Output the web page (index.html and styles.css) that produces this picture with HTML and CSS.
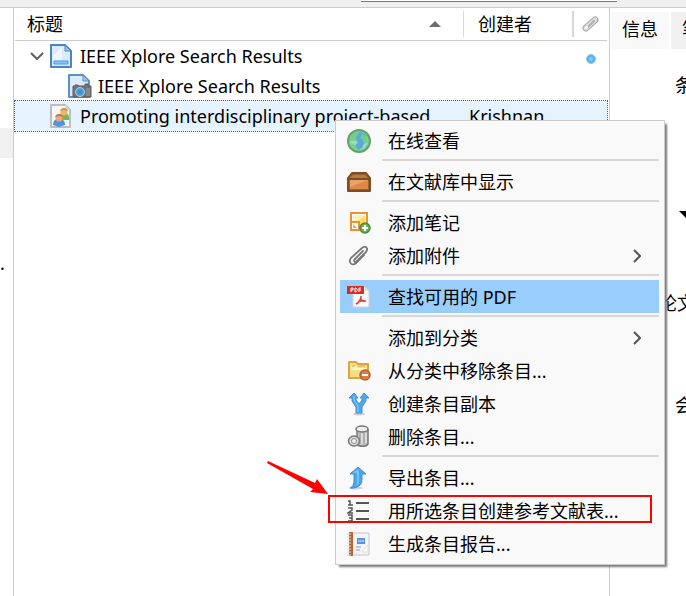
FILE: index.html
```
<!DOCTYPE html>
<html lang="zh-CN">
<head>
  <meta charset="UTF-8" />
  <meta name="viewport" content="width=device-width, initial-scale=1.0"/>
  <title>文献库</title>
  <link rel="stylesheet" href="styles.css">
</head>
<body>

  <header class="toolbar">
    <div class="search-edge"></div>
  </header>

  <div class="panes">
    <aside class="collections">
      <div class="collection-selected"></div>
      <span class="collection-name">.</span>
    </aside>

    <main class="items">
      <table class="tree">
        <thead>
          <tr>
            <th class="col-title">
              <div class="head">标题
                <svg width="12" height="6" viewBox="0 0 12 6"><path d="M0 6L6 0L12 6Z" fill="#6d6d6d"/></svg>
              </div>
            </th>
            <th class="col-creator"><div class="head">创建者</div></th>
            <th class="col-attach">
              <div class="head">
                <svg width="18" height="16" viewBox="0 0 18 16" fill="none" stroke-linecap="round">
                  <path d="M4 12L13 4" stroke="#a5a5a5" stroke-width="7"/>
                  <path d="M4 12L13 4" stroke="#dedede" stroke-width="5"/>
                  <path d="M6 11L12 5" stroke="#b0b0b0" stroke-width="2"/>
                  <path d="M4 12L5 11" stroke="#fff" stroke-width="2"/>
                </svg>
              </div>
            </th>
          </tr>
        </thead>
        <tbody>
          <tr>
            <td>
              <div class="cell">
                <svg class="twisty" width="14" height="8" viewBox="0 0 14 8"><path d="M1 1L7 7L13 1" fill="none" stroke="#606060" stroke-width="2"/></svg>
                <svg width="22" height="24" viewBox="0 0 22 24">
                  <path d="M1 1H15L21 7V23H1Z" fill="#dcebfc" stroke="#4b83c4" stroke-width="2" stroke-linejoin="round"/>
                  <path d="M3 12L12 3V16H3Z" fill="#eff6ff"/>
                  <path d="M15 1V7H21Z" fill="#9cc5ee" stroke="#4b83c4"/>
                  <path d="M4 17H18V20H4Z" fill="#83c8fa" stroke="#4b9ce2"/>
                </svg>
                IEEE Xplore Search Results
              </div>
            </td>
            <td></td>
            <td>
              <svg class="dot" width="10" height="10" viewBox="0 0 10 10"><circle cx="5" cy="5" r="4.5" fill="#53b7ea" stroke="#8bc9ea"/><circle cx="5" cy="5" r="2" fill="#7dcdf3"/></svg>
            </td>
          </tr>
          <tr>
            <td>
              <div class="cell child">
                <svg width="24" height="24" viewBox="0 0 24 24">
                  <path d="M1 1H15L21 7V23H1Z" fill="#dcebfc" stroke="#5c8fc9" stroke-width="2" stroke-linejoin="round"/>
                  <path d="M15 1V7H21Z" fill="#9cc5ee" stroke="#5c8fc9"/>
                  <path d="M5 12H7V11H10L11 12H17V10H20V12H23V23H5Z" fill="#707377" stroke="#5b5e63"/>
                  <path d="M18 14H22V22H18Z" fill="#85888c"/>
                  <circle cx="12" cy="18" r="4.5" fill="#55a7e4" stroke="#c0c6cb"/>
                  <circle cx="12" cy="18" r="2.5" fill="#3b91dc"/>
                </svg>
                IEEE Xplore Search Results
              </div>
            </td>
            <td></td>
            <td></td>
          </tr>
          <tr class="selected">
            <td>
              <div class="cell leaf">
                <svg width="22" height="24" viewBox="0 0 22 24">
                  <path d="M1 1H15L20 6V23H1Z" fill="#f5f5f3" stroke="#bdbdbd" stroke-width="2" stroke-linejoin="round"/>
                  <path d="M15 1V6H20Z" fill="#ddd"/>
                  <path d="M9 14C9 10 11 9 14 9S19 10 19 14V16H9Z" fill="#70b95c"/>
                  <circle cx="14" cy="8" r="3.5" fill="#eab570"/>
                  <path d="M10 7C11 3 17 3 18 7L14 6Z" fill="#c7954a"/>
                  <path d="M3 21C3 17 5 15 9 15S15 17 15 21L9 23Z" fill="#5294dc"/>
                  <circle cx="9" cy="14" r="3.5" fill="#edaa77"/>
                  <path d="M5 13C6 9 12 9 13 13L9 12Z" fill="#c4703f"/>
                </svg>
                Promoting interdisciplinary project-based
              </div>
            </td>
            <td><div class="creator">Krishnan</div></td>
            <td></td>
          </tr>
        </tbody>
      </table>
    </main>

    <aside class="info">
      <div class="tabs">
        <button class="tab active">信息</button>
        <button class="tab">笔</button>
      </div>
      <div class="fields">
        <span>条</span>
        <svg width="14" height="8" viewBox="0 0 14 8"><path d="M0 0H14L7 7Z" fill="#000"/></svg>
        <span class="wide">论文</span>
        <span>会</span>
      </div>
    </aside>
  </div>

  <ul class="menu">
    <li>
      <button>
        <svg width="24" height="24" viewBox="0 0 24 24">
          <circle cx="12" cy="12" r="11" fill="#7cc9a0" stroke="#64a368" stroke-width="2"/>
          <circle cx="12" cy="12" r="9" fill="#9adcb0"/>
          <path d="M8 4L14 3L19 6L20 11L17 14L15 19L11 21L8 17L11 13L7 10L3 12L5 7Z" fill="#5aa8de"/>
          <path d="M3 8L8 4L12 5L9 8L10 11L6 12L3 11ZM15 5L20 8L21 13L17 15L16 11L13 9ZM4 14L9 17L10 21L6 19Z" fill="#6fd284"/>
        </svg>
        在线查看
      </button>
    </li>
    <li class="separator"></li>
    <li>
      <button>
        <svg width="24" height="20" viewBox="0 0 24 20">
          <path d="M1 6L5 1H19L23 6V19H1Z" fill="#9c602e" stroke="#7c4d22" stroke-width="2" stroke-linejoin="round"/>
          <path d="M3 6L6 3H18L21 6Z" fill="#b27c43"/>
          <path d="M3 8H21V17H3Z" fill="#df8845"/>
          <path d="M3 8H21L3 15Z" fill="#e8a263"/>
          <path d="M1 7H23" stroke="#7c4d22" stroke-width="2"/>
        </svg>
        在文献库中显示
      </button>
    </li>
    <li class="separator"></li>
    <li>
      <button>
        <svg width="24" height="22" viewBox="0 0 24 22">
          <path d="M4 1H20V18H4Z" fill="#fff" stroke="#e99336" stroke-width="2"/>
          <path d="M6 3H18V16H6Z" fill="#fadd68"/>
          <path d="M6 3H18L6 13Z" fill="#fff1ae"/>
          <path d="M4 10H12V18H4Z" fill="#fff" stroke="#e99336" stroke-width="2"/>
          <path d="M6 12L10 16H6Z" fill="#f1a846"/>
          <circle cx="18" cy="16" r="5" fill="#6fae56" stroke="#518a3d" stroke-width="1.5"/>
          <path d="M15 16H21M18 13V19" stroke="#fff" stroke-width="2"/>
        </svg>
        添加笔记
      </button>
    </li>
    <li>
      <button>
        <svg width="24" height="22" viewBox="0 0 24 22" fill="none" stroke-linecap="round" stroke-linejoin="round">
          <path d="M16 6L8 14C6 16 8 18 10 16L19 7C22 3 18 0 15 3L4 13C1 17 5 22 9 18L17 10" stroke="#777" stroke-width="1.8"/>
        </svg>
        添加附件
        <svg class="arrow" width="8" height="14" viewBox="0 0 8 14"><path d="M1 1L7 7L1 13" fill="none" stroke="#555" stroke-width="2"/></svg>
      </button>
    </li>
    <li class="separator"></li>
    <li>
      <button class="hover">
        <svg width="24" height="22" viewBox="0 0 24 22">
          <path d="M6 1H18L22 5V21H6Z" fill="#fafafa" stroke="#cfd4da"/>
          <path d="M18 1V5H22Z" fill="#ddd"/>
          <path d="M0 0H17V8H0Z" fill="#dc2d24"/>
          <path d="M4 6V2H6V4H4M8 6V2C11 2 11 6 8 6M12 6V2H14M12 4H14" fill="none" stroke="#fff"/>
          <path d="M9 18C12 17 14 13 14 10C13 13 15 16 18 15C16 14 12 15 9 18Z" fill="none" stroke="#e2453d" stroke-width="1.5"/>
        </svg>
        查找可用的 PDF
      </button>
    </li>
    <li class="separator"></li>
    <li>
      <button>
        <span class="no-icon"></span>
        添加到分类
        <svg class="arrow" width="8" height="14" viewBox="0 0 8 14"><path d="M1 1L7 7L1 13" fill="none" stroke="#555" stroke-width="2"/></svg>
      </button>
    </li>
    <li>
      <button>
        <svg width="24" height="20" viewBox="0 0 24 20">
          <path d="M2 1H9L11 3H21V17H2Z" fill="#f9dc84" stroke="#d9a840" stroke-width="2" stroke-linejoin="round"/>
          <path d="M4 5H9L11 7H19V9H4Z" fill="#fff5c0"/>
          <path d="M5 5H8M11 5H18" stroke="#d9a840"/>
          <circle cx="18" cy="14" r="5" fill="#dc7b47" stroke="#b5602f" stroke-width="1.5"/>
          <path d="M15 14H21" stroke="#fff" stroke-width="2"/>
        </svg>
        从分类中移除条目...
      </button>
    </li>
    <li>
      <button>
        <svg width="24" height="24" viewBox="0 0 24 24">
          <ellipse cx="12" cy="22" rx="6" ry="1.5" fill="#ccc"/>
          <path d="M9 21V15L5 9V6H2L7 1L11 6H9V8L12 12L15 8V6H13L17 1L22 6H19V9L15 15V21Z" fill="#4ea6e8" stroke="#3f92d6" stroke-linejoin="round"/>
          <path d="M11 20V14L7 8V4" fill="none" stroke="#92d0f6"/>
        </svg>
        创建条目副本
      </button>
    </li>
    <li>
      <button>
        <svg width="24" height="24" viewBox="0 0 24 24">
          <path d="M10 4V19C12 22 19 22 21 19V4" fill="#c5c5c5" stroke="#777" stroke-width="1.5"/>
          <path d="M13 8V19M17 8V19" stroke="#999"/>
          <path d="M15 8V19M19 8V18" stroke="#eee"/>
          <ellipse cx="15" cy="4" rx="6" ry="3" fill="#eee" stroke="#777" stroke-width="1.5"/>
          <ellipse cx="7" cy="16" rx="5.5" ry="5" fill="#ddd" stroke="#777" stroke-width="1.5"/>
          <circle cx="7" cy="16" r="2.5" fill="#f7f7f7" stroke="#888"/>
        </svg>
        删除条目...
      </button>
    </li>
    <li class="separator"></li>
    <li>
      <button>
        <svg width="24" height="24" viewBox="0 0 24 24">
          <ellipse cx="9" cy="22" rx="7" ry="1.5" fill="#d5d5d5"/>
          <path d="M3 22C6 21 7 18 7 14V8H3L11 1L19 8H15V14C15 19 10 23 3 22Z" fill="#4da6e8" stroke="#3d93d8" stroke-linejoin="round"/>
          <path d="M6 7L11 3L12 7V14C12 17 11 19 9 20C11 17 10 10 10 7Z" fill="#7cc3f4"/>
        </svg>
        导出条目...
      </button>
    </li>
    <li class="marked">
      <button>
        <svg width="24" height="22" viewBox="0 0 24 22" fill="none" stroke="#555">
          <path d="M9 3H22M9 11H22M9 19H22" stroke-width="2"/>
          <path d="M1 1H3V5M1 5H6M1 8H5V10L1 13H6M1 15H5V21H1M2 18H5" stroke-width="1.5"/>
        </svg>
        用所选条目创建参考文献表...
      </button>
      <svg class="pointer" width="62" height="36" viewBox="0 0 62 36"><path d="M1 0L48 22L50 18L61 33L43 31L46 28L0 2Z" fill="#f00"/></svg>
    </li>
    <li>
      <button>
        <svg width="24" height="24" viewBox="0 0 24 24">
          <path d="M5 1H22V23H5Z" fill="#f2f4f8" stroke="#c3c7cd"/>
          <path d="M2 0H6V24H2Z" fill="#bd6431"/>
          <path d="M0 2H4M0 5H4M0 8H4M0 11H4M0 14H4M0 17H4M0 20H4M0 23H4" stroke="#ddd"/>
          <path d="M10 6H18V12H10Z" fill="#5e91e0"/>
          <path d="M11 9H17" stroke="#dbe8ff"/>
          <path d="M9 15H14M9 18H13" stroke="#7aa3e2"/>
          <path d="M15 20L21 13V20Z" fill="#fff" stroke="#ddd"/>
        </svg>
        生成条目报告...
      </button>
    </li>
  </ul>

</body>
</html>
```
FILE: styles.css
```
* { margin: 0; padding: 0; box-sizing: border-box; }

body {
  font-family: 'Noto Sans', 'Noto Sans CJK SC', sans-serif;
  font-size: 18px;
  line-height: 24px;
  color: #000;
  background-color: #fff;
  display: flex;
  flex-direction: column;
  min-height: 100vh;
  overflow: hidden;
}

button {
  font: inherit;
  color: inherit;
  border: none;
  background: none;
  white-space: nowrap;
}

svg {
  display: block;
  flex: none;
}

.toolbar {
  height: 8px;
  background-color: #f0f0f0;
  border-bottom: 1px solid #ccc;
  padding: 0 69px 0 361px;
}

.search-edge {
  height: 2px;
  background-color: #fff;
  border-bottom: 1px solid #7a7a7a;
}

.panes {
  display: flex;
  flex: 1;
}

.collections {
  width: 14px;
  border-right: 1px solid #ccc;
  padding-top: 120px;
}

.collection-selected {
  height: 30px;
  background-color: #f0f0f0;
  margin-bottom: 93px;
}

.collection-name {
  display: block;
}

.items {
  flex: 1;
  min-width: 0;
  padding: 0 2px 0 1px;
}

/* item tree */
.tree {
  width: 100%;
  table-layout: fixed;
  border-collapse: separate;
  border-spacing: 0;
}

.tree th {
  height: 33px;
  font-weight: normal;
  text-align: left;
  border-bottom: 1px solid #ccc;
}

.tree td {
  height: 30px;
  white-space: nowrap;
}

.col-creator { width: 110px; }
.col-attach { width: 33px; }

.head {
  display: flex;
  align-items: center;
  justify-content: space-between;
  height: 26px;
  padding: 0 22px 0 12px;
  border-right: 1px solid #d9d9d9;
}

.col-creator .head {
  padding: 0 0 0 14px;
  border-right: 2px solid #d9d9d9;
}

.col-attach .head {
  padding: 0 8px;
  border: none;
}

.cell {
  display: flex;
  align-items: center;
  gap: 8px;
  padding-left: 15px;
}

.cell.child { padding-left: 53px; gap: 6px; }
.cell.leaf { padding-left: 35px; }
.twisty { margin-right: -2px; }
.dot { margin: 6px 0 0 12px; }
.creator { padding-left: 5px; }

.selected {
  background-color: #e5f3ff;
  outline: 1px dotted #0078d7;
}

/* item details */
.info {
  width: 77px;
  border-left: 1px solid #ccc;
  overflow: hidden;
}

.tabs {
  display: flex;
  gap: 2px;
  padding: 4px 0 0 1px;
}

.tab {
  height: 37px;
  padding: 0 11px 4px;
  background-color: #f0f0f0;
}

.tab.active {
  background-color: #f9f9f9;
}

.fields {
  display: flex;
  flex-direction: column;
  gap: 78px;
  padding: 24px 0 0 65px;
  white-space: nowrap;
}

.fields svg { margin: 36px 0 -6px 4px; }
.fields .wide { margin-left: -16px; }

/* context menu */
.menu {
  position: absolute;
  left: 335px;
  top: 120px;
  width: 330px;
  list-style: none;
  padding: 3px 5px 4px 4px;
  background-color: #f9f9f9;
  border: 1px solid #ccc;
  box-shadow: 3px 3px 2px -1px #777;
}

.menu button {
  display: flex;
  align-items: center;
  gap: 17px;
  width: 100%;
  height: 33px;
  padding: 0 18px 0 7px;
}

.menu button:hover,
.menu button.hover {
  background-color: #99cdfb;
}

.menu .arrow { margin-left: auto; }
.no-icon { width: 24px; }

.separator {
  height: 8px;
  padding-top: 2px;
}

.separator::before {
  content: '';
  display: block;
  height: 2px;
  margin-left: 42px;
  background-color: #d7d7d7;
}

/* red frame and arrow round one command */
.marked { position: relative; }

.marked::after {
  content: '';
  position: absolute;
  inset: 1px 7px 4px -12px;
  border: 2px solid #f00;
}

.pointer {
  position: absolute;
  right: 330px;
  top: -33px;
}
```
